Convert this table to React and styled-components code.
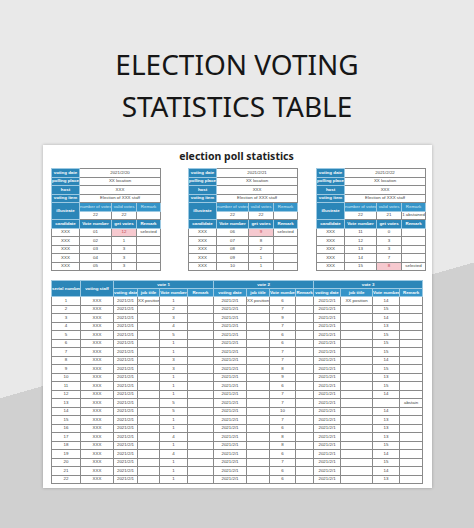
import styled, { createGlobalStyle } from "styled-components";

const GlobalStyle = createGlobalStyle`
  html, body {
    margin: 0;
    padding: 0;
    height: 100%;
  }
  body {
    background: linear-gradient(164deg, #e9e9e9 60%, #d0d0d0 60%);
    font-family: "Liberation Sans", Arial, sans-serif;
  }
`;

const Page = styled.div`
  width: 474px;
  height: 528px;
  display: flex;
  flex-direction: column;
  overflow: hidden;
`;

const Title = styled.h1`
  margin: 0;
  padding-top: 43px;
  font-family: "Noto Sans", sans-serif;
  font-weight: 400;
  font-size: 28px;
  line-height: 42px;
  color: #161616;
  text-align: center;
`;

const Paper = styled.div`
  margin: 18px 0 0 43px;
  width: 389px;
  height: 343px;
  box-sizing: border-box;
  padding: 4px 10px 0 8px;
  background: #fff;
  box-shadow: 0 0 3px rgba(0, 0, 0, 0.25);
  display: flex;
  flex-direction: column;
`;

const SheetTitle = styled.h2`
  margin: 0 0 5px;
  font-family: "Noto Sans", sans-serif;
  font-weight: 700;
  font-size: 10.5px;
  line-height: 14px;
  color: #1f1f1f;
  text-align: center;
`;

const SmallRow = styled.div`
  display: flex;
  align-items: flex-start;
`;

const Grid = styled.table`
  border-collapse: collapse;
  table-layout: fixed;
  width: ${(p) => p.$width}px;
  margin-left: ${(p) => p.$offset || 0}px;
  border: 1px solid #555;
  font-family: "Liberation Sans", Arial, sans-serif;
  font-size: 4.4px;
  color: #444;
`;

const Cell = styled.td`
  height: ${(p) => p.$h || 7.5}px;
  padding: 0;
  line-height: 6px;
  text-align: center;
  white-space: nowrap;
  overflow: hidden;
  border: 1px solid ${(p) => (p.$head ? "#9cc9e2" : "#8a8a8a")};
  background: ${(p) =>
    p.$pink ? "#f6c9cf" : p.$head ? (p.$alt ? "#3594c8" : "#2b86b8") : "#fff"};
  color: ${(p) =>
    p.$pink ? "#c0424f" : p.$head ? (p.$soft ? "#d3e9f6" : "#fff") : "#444"};
  font-weight: ${(p) => (p.$head && !p.$soft ? 700 : 400)};
`;

const BigWrap = styled.div`
  margin-top: 9px;
`;

const smallTables = [
  {
    date: "2021/2/20",
    votes: "22",
    valid: "22",
    remark: "",
    offset: 0,
    rows: [
      ["01", "12"],
      ["02", "1"],
      ["03", "3"],
      ["04", "3"],
      ["05", "3"],
    ],
    pick: 0,
  },
  {
    date: "2021/2/21",
    votes: "22",
    valid: "22",
    remark: "",
    offset: 27,
    rows: [
      ["06", "9"],
      ["07", "8"],
      ["08", "2"],
      ["09", "1"],
      ["10", "1"],
    ],
    pick: 0,
  },
  {
    date: "2021/2/22",
    votes: "22",
    valid: "21",
    remark: "1 abstained",
    offset: 18,
    rows: [
      ["11", "0"],
      ["12", "3"],
      ["13", "3"],
      ["14", "7"],
      ["15", "8"],
    ],
    pick: 4,
  },
];

const SmallTable = ({ t }) => (
  <Grid $width={109} $offset={t.offset}>
    <colgroup>
      <col style={{ width: "28px" }} />
      <col style={{ width: "32px" }} />
      <col style={{ width: "25px" }} />
      <col style={{ width: "24px" }} />
    </colgroup>
    <tbody>
      {[
        ["voting date", t.date],
        ["polling place", "XX location"],
        ["host", "XXX"],
        ["voting item", "Election of XXX staff"],
      ].map(([k, v]) => (
        <tr key={k}>
          <Cell $head>{k}</Cell>
          <Cell colSpan={3}>{v}</Cell>
        </tr>
      ))}
      <tr>
        <Cell $head rowSpan={2}>
          illustrate
        </Cell>
        <Cell $head $alt $soft>number of votes</Cell>
        <Cell $head $alt $soft>valid votes</Cell>
        <Cell $head $alt $soft>Remark</Cell>
      </tr>
      <tr>
        <Cell>{t.votes}</Cell>
        <Cell>{t.valid}</Cell>
        <Cell>{t.remark}</Cell>
      </tr>
      <tr>
        <Cell $head>candidate</Cell>
        <Cell $head>Vote number</Cell>
        <Cell $head>get votes</Cell>
        <Cell $head>Remark</Cell>
      </tr>
      {t.rows.map(([num, got], i) => (
        <tr key={num}>
          <Cell>XXX</Cell>
          <Cell>{num}</Cell>
          <Cell $pink={i === t.pick}>{got}</Cell>
          <Cell>{i === t.pick ? "selected" : ""}</Cell>
        </tr>
      ))}
    </tbody>
  </Grid>
);

const v1 = [1, 2, 3, 4, 5, 1, 1, 3, 3, 1, 1, 1, 5, 5, 1, 1, 4, 1, 4, 1, 1, 1];
const v2 = [6, 7, 9, 7, 6, 6, 7, 7, 8, 9, 6, 7, 7, 10, 7, 6, 8, 8, 6, 7, 6, 6];
const v3 = [14, 15, 14, 13, 15, 15, 15, 14, 15, 13, 15, 14, "", 14, 13, 13, 13, 15, 14, 15, 14, 13];

const widths = [29, 33, 24, 22, 28, 26, 33, 23, 26, 18, 27, 32, 27, 23];

const groups = [
  { name: "vote 1", date: "voting data", nums: v1 },
  { name: "vote 2", date: "voting date", nums: v2 },
  { name: "vote 3", date: "voting date", nums: v3 },
];

const BigTable = () => (
  <Grid $width={371}>
    <colgroup>
      {widths.map((w, i) => (
        <col key={i} style={{ width: `${w}px` }} />
      ))}
    </colgroup>
    <thead>
      <tr>
        <Cell $head $h={7} rowSpan={2}>serial number</Cell>
        <Cell $head $h={7} rowSpan={2}>voting staff</Cell>
        {groups.map((g) => (
          <Cell $head $h={7} colSpan={4} key={g.name}>
            {g.name}
          </Cell>
        ))}
      </tr>
      <tr>
        {groups.map((g) => [
          <Cell $head $alt $h={7} key={g.name + "d"}>{g.date}</Cell>,
          <Cell $head $alt $h={7} key={g.name + "j"}>job title</Cell>,
          <Cell $head $alt $h={7} key={g.name + "n"}>Vote number</Cell>,
          <Cell $head $alt $h={7} key={g.name + "r"}>Remark</Cell>,
        ])}
      </tr>
    </thead>
    <tbody>
      {v1.map((_, i) => (
        <tr key={i}>
          <Cell>{i + 1}</Cell>
          <Cell>XXX</Cell>
          {groups.map((g, gi) => [
            <Cell key={gi + "d"}>2021/2/1</Cell>,
            <Cell key={gi + "j"}>{i === 0 ? "XX position" : ""}</Cell>,
            <Cell key={gi + "n"}>{g.nums[i]}</Cell>,
            <Cell key={gi + "r"}>{gi === 2 && i === 12 ? "abstain" : ""}</Cell>,
          ])}
        </tr>
      ))}
    </tbody>
  </Grid>
);

export default function App() {
  return (
    <Page>
      <GlobalStyle />
      <Title>
        ELECTION VOTING
        <br />
        STATISTICS TABLE
      </Title>
      <Paper>
        <SheetTitle>election poll statistics</SheetTitle>
        <SmallRow>
          {smallTables.map((t) => (
            <SmallTable t={t} key={t.date} />
          ))}
        </SmallRow>
        <BigWrap>
          <BigTable />
        </BigWrap>
      </Paper>
    </Page>
  );
}
